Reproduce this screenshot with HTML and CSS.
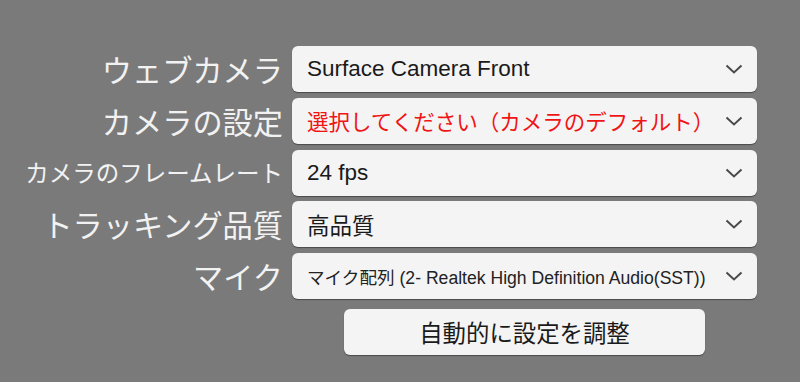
FILE: index.html
```html
<!DOCTYPE html>
<html lang="ja">
<head>
<meta charset="utf-8">
<link rel="stylesheet" href="styles.css">
</head>
<body>
<div class="panel">
  <div class="form">
    <div class="label">ウェブカメラ</div>
    <div class="select"><span class="value">Surface Camera Front</span><svg class="chev" viewBox="0 0 18 10" width="18" height="10"><polyline points="1.5,1.5 9,8.5 16.5,1.5"/></svg></div>

    <div class="label">カメラの設定</div>
    <div class="select"><span class="value red">選択してください（カメラのデフォルト）</span><svg class="chev" viewBox="0 0 18 10" width="18" height="10"><polyline points="1.5,1.5 9,8.5 16.5,1.5"/></svg></div>

    <div class="label small">カメラのフレームレート</div>
    <div class="select"><span class="value">24 fps</span><svg class="chev" viewBox="0 0 18 10" width="18" height="10"><polyline points="1.5,1.5 9,8.5 16.5,1.5"/></svg></div>

    <div class="label">トラッキング品質</div>
    <div class="select"><span class="value">高品質</span><svg class="chev" viewBox="0 0 18 10" width="18" height="10"><polyline points="1.5,1.5 9,8.5 16.5,1.5"/></svg></div>

    <div class="label">マイク</div>
    <div class="select"><span class="value mic">マイク配列 (2- Realtek High Definition Audio(SST))</span><svg class="chev" viewBox="0 0 18 10" width="18" height="10"><polyline points="1.5,1.5 9,8.5 16.5,1.5"/></svg></div>

    <div class="spacer"></div>
    <div class="btn-wrap"><button class="btn">自動的に設定を調整</button></div>
  </div>
</div>
</body>
</html>
```

FILE: styles.css
```css
html, body {
  margin: 0;
  padding: 0;
  background: #7a7a7a;
  width: 800px;
  height: 382px;
  overflow: hidden;
  font-family: "Liberation Sans", "Noto Sans CJK JP", sans-serif;
}

.panel {
  padding-top: 46px;
}

.form {
  display: grid;
  grid-template-columns: 283px 465px;
  column-gap: 9px;
  row-gap: 5.75px;
  grid-auto-rows: 46px;
}

.label {
  display: flex;
  align-items: center;
  justify-content: flex-end;
  color: #f2f2f2;
  font-family: "Noto Sans CJK JP", sans-serif;
  font-size: 30.2px;
  line-height: 1;
  white-space: nowrap;
}

.label.small {
  font-size: 23.5px;
}

.select {
  display: flex;
  align-items: center;
  justify-content: space-between;
  background: #f4f4f4;
  border-radius: 6px;
  box-shadow: 0 1px 1px rgba(0, 0, 0, 0.4);
  padding: 0 14px 0 15px;
  box-sizing: border-box;
  height: 46px;
}

.value {
  color: #1a1a1a;
  font-size: 22.5px;
  white-space: nowrap;
}

.value.red {
  color: #f01414;
  font-size: 21.5px;
  font-family: "Noto Sans CJK JP", sans-serif;
}

.value.mic {
  font-size: 17.6px;
  color: #222;
}

.chev {
  flex: none;
  fill: none;
  stroke: #4a4a4a;
  stroke-width: 2;
}

.spacer {
  height: 46px;
}

.btn-wrap {
  padding-top: 4px;
  padding-left: 52px;
}

.btn {
  width: 361px;
  height: 46px;
  background: #f4f4f4;
  border: none;
  border-radius: 6px;
  box-shadow: 0 1px 1px rgba(0, 0, 0, 0.4);
  color: #1a1a1a;
  font-family: "Noto Sans CJK JP", sans-serif;
  font-size: 23.4px;
  padding: 0;
}
```
